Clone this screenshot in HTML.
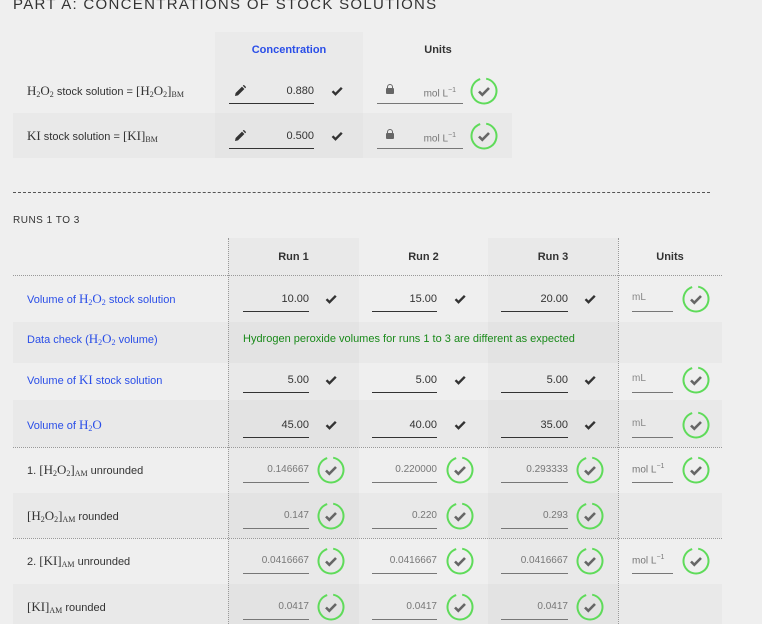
<!DOCTYPE html>
<html><head><meta charset="utf-8"><style>
*{margin:0;padding:0;box-sizing:border-box}
body{width:762px;height:624px;background:#efefef;font-family:"Liberation Sans",sans-serif;position:relative;overflow:hidden;color:#333}
.a{position:absolute}
.m{font-family:"Liberation Serif",serif;font-size:13px}
.sub{font-size:8px;vertical-align:-2px}
.lbl{font-size:11px;line-height:14px}
.in{position:absolute;height:1px;background:#333}
.ing{position:absolute;height:1px;background:#777}
.v{position:absolute;font-size:11px;text-align:right;line-height:14px}
.ck{position:absolute;width:12px;height:12px}
.cc{position:absolute;width:28px;height:28px}
.hd{position:absolute;font-size:11px;font-weight:bold;color:#333;text-align:center;line-height:14px}
.blue{color:#2a4ee8}
</style></head><body>
<svg width="0" height="0" style="position:absolute"><defs>
<symbol id="c" viewBox="0 0 28 28"><circle cx="14" cy="14" r="12.5" fill="none" stroke="#5fdb5a" stroke-width="2" stroke-dasharray="72 6.5" transform="rotate(-80 14 14)"/><path d="M9 14.5l3.3 3.3L19 11" fill="none" stroke="#666" stroke-width="2.6"/></symbol>
<symbol id="k" viewBox="0 0 12 12"><path d="M1.5 6.2l3 3L10.8 2.8" fill="none" stroke="#333" stroke-width="2.4"/></symbol>
<symbol id="p" viewBox="0 0 12 12"><path d="M1 11l0.6-3L8 1.6l2.4 2.4L4 10.4z" fill="#333"/><path d="M8.8 0.8l1-1 2.4 2.4-1 1z" fill="#333"/></symbol>
</defs></svg>

<div class="a" style="left:13px;top:-4px;font-size:15px;letter-spacing:1.3px;color:#333">PART A: CONCENTRATIONS OF STOCK SOLUTIONS</div>

<div class="a" style="left:215px;top:32px;width:148px;height:126px;background:#eaeaea"></div>
<div class="a" style="left:13px;top:113px;width:499px;height:45px;background:#e9e9e9"></div>
<div class="a" style="left:215px;top:113px;width:148px;height:45px;background:#e5e5e5"></div>
<div class="hd blue" style="left:215px;top:43px;width:148px">Concentration</div>
<div class="hd" style="left:363px;top:43px;width:150px">Units</div>

<div class="a lbl" style="left:27px;top:84px"><span class="m">H<span class="sub">2</span>O<span class="sub">2</span></span> stock solution = <span class="m">[H<span class="sub">2</span>O<span class="sub">2</span>]<span class="sub">BM</span></span></div>
<div class="a lbl" style="left:27px;top:129px"><span class="m">KI</span> stock solution = <span class="m">[KI]<span class="sub">BM</span></span></div>

<svg class="ck" style="left:234px;top:85px"><use href="#p"/></svg>
<div class="v" style="left:254px;top:84px;width:60px">0.880</div>
<div class="in" style="left:229px;top:103px;width:85px"></div>
<svg class="ck" style="left:331px;top:85px"><use href="#k"/></svg>
<svg class="ck" style="left:234px;top:130px"><use href="#p"/></svg>
<div class="v" style="left:254px;top:129px;width:60px">0.500</div>
<div class="in" style="left:229px;top:148px;width:85px"></div>
<svg class="ck" style="left:331px;top:130px"><use href="#k"/></svg>

<div class="a" style="left:386px;top:84px;width:8px;height:9px"><div style="position:absolute;left:1px;top:0;width:6px;height:6px;border:1.5px solid #666;border-radius:3px 3px 0 0"></div><div style="position:absolute;left:0;top:4px;width:8px;height:6px;background:#666;border-radius:1px"></div></div>
<div class="v" style="left:400px;top:84px;width:56px;color:#777;font-size:10px">mol L<sup style="font-size:7px">−1</sup></div>
<div class="ing" style="left:377px;top:103px;width:86px"></div>
<svg class="cc" style="left:470px;top:77px"><use href="#c"/></svg>
<div class="a" style="left:386px;top:129px;width:8px;height:9px"><div style="position:absolute;left:1px;top:0;width:6px;height:6px;border:1.5px solid #666;border-radius:3px 3px 0 0"></div><div style="position:absolute;left:0;top:4px;width:8px;height:6px;background:#666;border-radius:1px"></div></div>
<div class="v" style="left:400px;top:129px;width:56px;color:#777;font-size:10px">mol L<sup style="font-size:7px">−1</sup></div>
<div class="ing" style="left:377px;top:148px;width:86px"></div>
<svg class="cc" style="left:470px;top:122px"><use href="#c"/></svg>

<div class="a" style="left:13px;top:192px;width:697px;border-top:1px dashed #555"></div>
<div class="a" style="left:13px;top:215px;font-size:10px;letter-spacing:.5px;color:#333">RUNS 1 TO 3</div>

<div class="a" style="left:13px;top:322px;width:709px;height:41px;background:#e9e9e9"></div>
<div class="a" style="left:13px;top:400px;width:709px;height:47px;background:#e9e9e9"></div>
<div class="a" style="left:13px;top:493px;width:709px;height:45px;background:#e9e9e9"></div>
<div class="a" style="left:13px;top:584px;width:709px;height:40px;background:#e9e9e9"></div>
<div class="a" style="left:228px;top:238px;width:131px;height:386px;background:rgba(0,0,0,0.025)"></div>
<div class="a" style="left:488px;top:238px;width:130px;height:386px;background:rgba(0,0,0,0.025)"></div>
<div class="a" style="left:228px;top:238px;height:386px;border-left:1px dotted #999"></div>
<div class="a" style="left:618px;top:238px;height:386px;border-left:1px dotted #999"></div>
<div class="a" style="left:13px;top:275px;width:709px;border-top:1px dotted #999"></div>
<div class="a" style="left:13px;top:447px;width:709px;border-top:1px dotted #999"></div>
<div class="a" style="left:13px;top:538px;width:709px;border-top:1px dotted #999"></div>

<div class="hd" style="left:228px;top:250px;width:131px">Run 1</div>
<div class="hd" style="left:359px;top:250px;width:129px">Run 2</div>
<div class="hd" style="left:488px;top:250px;width:130px">Run 3</div>
<div class="hd" style="left:618px;top:250px;width:104px">Units</div>

<div class="a lbl blue" style="left:27px;top:292px">Volume of <span class="m">H<span class="sub">2</span>O<span class="sub">2</span></span> stock solution</div>
<div class="a lbl blue" style="left:27px;top:332px">Data check (<span class="m">H<span class="sub">2</span>O<span class="sub">2</span></span> volume)</div>
<div class="a lbl" style="left:243px;top:332px;color:#1a8a1a">Hydrogen peroxide volumes for runs 1 to 3 are different as expected</div>
<div class="a lbl blue" style="left:27px;top:373px">Volume of <span class="m">KI</span> stock solution</div>
<div class="a lbl blue" style="left:27px;top:418px">Volume of <span class="m">H<span class="sub">2</span>O</span></div>
<div class="a lbl" style="left:27px;top:463px">1. <span class="m">[H<span class="sub">2</span>O<span class="sub">2</span>]<span class="sub">AM</span></span> unrounded</div>
<div class="a lbl" style="left:27px;top:509px"><span class="m">[H<span class="sub">2</span>O<span class="sub">2</span>]<span class="sub">AM</span></span> rounded</div>
<div class="a lbl" style="left:27px;top:554px">2. <span class="m">[KI]<span class="sub">AM</span></span> unrounded</div>
<div class="a lbl" style="left:27px;top:600px"><span class="m">[KI]<span class="sub">AM</span></span> rounded</div>

<div class="v" style="left:243px;top:292px;width:66px">10.00</div><div class="in" style="left:243px;top:311px;width:66px"></div><svg class="ck" style="left:325px;top:293px"><use href="#k"/></svg>
<div class="v" style="left:372px;top:292px;width:65px">15.00</div><div class="in" style="left:372px;top:311px;width:65px"></div><svg class="ck" style="left:454px;top:293px"><use href="#k"/></svg>
<div class="v" style="left:501px;top:292px;width:67px">20.00</div><div class="in" style="left:501px;top:311px;width:67px"></div><svg class="ck" style="left:584px;top:293px"><use href="#k"/></svg>
<div class="a" style="left:632px;top:292px;font-size:10px;color:#888">mL</div><div class="ing" style="left:632px;top:311px;width:41px"></div><svg class="cc" style="left:682px;top:285px"><use href="#c"/></svg>

<div class="v" style="left:243px;top:373px;width:66px">5.00</div><div class="in" style="left:243px;top:392px;width:66px"></div><svg class="ck" style="left:325px;top:374px"><use href="#k"/></svg>
<div class="v" style="left:372px;top:373px;width:65px">5.00</div><div class="in" style="left:372px;top:392px;width:65px"></div><svg class="ck" style="left:454px;top:374px"><use href="#k"/></svg>
<div class="v" style="left:501px;top:373px;width:67px">5.00</div><div class="in" style="left:501px;top:392px;width:67px"></div><svg class="ck" style="left:584px;top:374px"><use href="#k"/></svg>
<div class="a" style="left:632px;top:373px;font-size:10px;color:#888">mL</div><div class="ing" style="left:632px;top:392px;width:41px"></div><svg class="cc" style="left:682px;top:366px"><use href="#c"/></svg>

<div class="v" style="left:243px;top:418px;width:66px">45.00</div><div class="in" style="left:243px;top:437px;width:66px"></div><svg class="ck" style="left:325px;top:419px"><use href="#k"/></svg>
<div class="v" style="left:372px;top:418px;width:65px">40.00</div><div class="in" style="left:372px;top:437px;width:65px"></div><svg class="ck" style="left:454px;top:419px"><use href="#k"/></svg>
<div class="v" style="left:501px;top:418px;width:67px">35.00</div><div class="in" style="left:501px;top:437px;width:67px"></div><svg class="ck" style="left:584px;top:419px"><use href="#k"/></svg>
<div class="a" style="left:632px;top:418px;font-size:10px;color:#888">mL</div><div class="ing" style="left:632px;top:437px;width:41px"></div><svg class="cc" style="left:682px;top:411px"><use href="#c"/></svg>

<div class="v" style="left:243px;top:463px;width:66px;color:#777;font-size:10px">0.146667</div><div class="ing" style="left:243px;top:482px;width:66px"></div><svg class="cc" style="left:317px;top:456px"><use href="#c"/></svg>
<div class="v" style="left:372px;top:463px;width:65px;color:#777;font-size:10px">0.220000</div><div class="ing" style="left:372px;top:482px;width:65px"></div><svg class="cc" style="left:446px;top:456px"><use href="#c"/></svg>
<div class="v" style="left:501px;top:463px;width:67px;color:#777;font-size:10px">0.293333</div><div class="ing" style="left:501px;top:482px;width:67px"></div><svg class="cc" style="left:576px;top:456px"><use href="#c"/></svg>
<div class="a" style="left:632px;top:463px;font-size:10px;color:#777">mol L<sup style="font-size:7px">−1</sup></div><div class="ing" style="left:632px;top:482px;width:41px"></div><svg class="cc" style="left:682px;top:456px"><use href="#c"/></svg>

<div class="v" style="left:243px;top:509px;width:66px;color:#777;font-size:10px">0.147</div><div class="ing" style="left:243px;top:528px;width:66px"></div><svg class="cc" style="left:317px;top:502px"><use href="#c"/></svg>
<div class="v" style="left:372px;top:509px;width:65px;color:#777;font-size:10px">0.220</div><div class="ing" style="left:372px;top:528px;width:65px"></div><svg class="cc" style="left:446px;top:502px"><use href="#c"/></svg>
<div class="v" style="left:501px;top:509px;width:67px;color:#777;font-size:10px">0.293</div><div class="ing" style="left:501px;top:528px;width:67px"></div><svg class="cc" style="left:576px;top:502px"><use href="#c"/></svg>

<div class="v" style="left:243px;top:554px;width:66px;color:#777;font-size:10px">0.0416667</div><div class="ing" style="left:243px;top:573px;width:66px"></div><svg class="cc" style="left:317px;top:547px"><use href="#c"/></svg>
<div class="v" style="left:372px;top:554px;width:65px;color:#777;font-size:10px">0.0416667</div><div class="ing" style="left:372px;top:573px;width:65px"></div><svg class="cc" style="left:446px;top:547px"><use href="#c"/></svg>
<div class="v" style="left:501px;top:554px;width:67px;color:#777;font-size:10px">0.0416667</div><div class="ing" style="left:501px;top:573px;width:67px"></div><svg class="cc" style="left:576px;top:547px"><use href="#c"/></svg>
<div class="a" style="left:632px;top:554px;font-size:10px;color:#777">mol L<sup style="font-size:7px">−1</sup></div><div class="ing" style="left:632px;top:573px;width:41px"></div><svg class="cc" style="left:682px;top:547px"><use href="#c"/></svg>

<div class="v" style="left:243px;top:600px;width:66px;color:#777;font-size:10px">0.0417</div><div class="ing" style="left:243px;top:619px;width:66px"></div><svg class="cc" style="left:317px;top:593px"><use href="#c"/></svg>
<div class="v" style="left:372px;top:600px;width:65px;color:#777;font-size:10px">0.0417</div><div class="ing" style="left:372px;top:619px;width:65px"></div><svg class="cc" style="left:446px;top:593px"><use href="#c"/></svg>
<div class="v" style="left:501px;top:600px;width:67px;color:#777;font-size:10px">0.0417</div><div class="ing" style="left:501px;top:619px;width:67px"></div><svg class="cc" style="left:576px;top:593px"><use href="#c"/></svg>
</body></html>
